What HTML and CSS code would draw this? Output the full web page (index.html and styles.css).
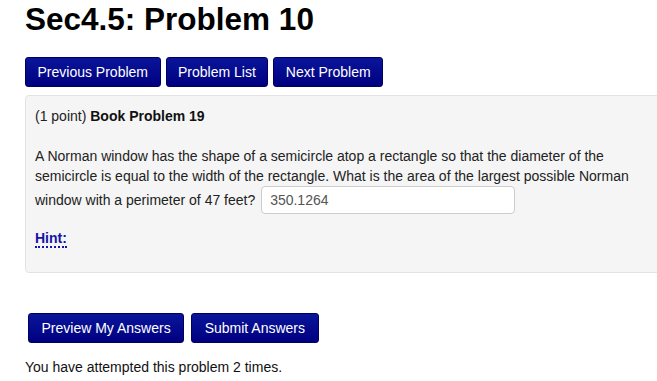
FILE: index.html
```html
<!DOCTYPE html>
<html lang="en">
<head>
<meta charset="utf-8">
<title>Sec4.5: Problem 10</title>
<link rel="stylesheet" href="styles.css">
</head>
<body>
<div class="page">
  <h1 class="title">Sec4.5: Problem 10</h1>
  <nav class="nav">
    <a class="btn" href="#">Previous Problem</a>
    <a class="btn" href="#">Problem List</a>
    <a class="btn" href="#">Next Problem</a>
  </nav>
  <div class="problem">
    <div class="points">(1 point) <b>Book Problem 19</b></div>
    <p class="text">A Norman window has the shape of a semicircle atop a rectangle so that the diameter of the semicircle is equal to the width of the rectangle. What is the area of the largest possible Norman window with a perimeter of 47 feet? <input class="answer" type="text" value="350.1264"></p>
    <div class="hint"><a class="hint-link" href="#">Hint:</a></div>
  </div>
  <div class="actions">
    <button class="btn btn-wide" type="button">Preview My Answers</button>
    <button class="btn btn-wide" type="button">Submit Answers</button>
  </div>
  <p class="attempts">You have attempted this problem 2 times.</p>
</div>
</body>
</html>
```

FILE: styles.css
```css
html, body {
  margin: 0;
  padding: 0;
  background: #fff;
  overflow: hidden;
}
body {
  font-family: "Liberation Sans", Arial, sans-serif;
  font-size: 14px;
  line-height: 20px;
  color: #222;
}
.page {
  padding-left: 25px;
}
.title {
  margin: 2px 0 0;
  font-size: 31.5px;
  line-height: 35px;
  font-weight: bold;
  color: #000;
}
.nav {
  display: flex;
  gap: 5px;
  margin-top: 20px;
}
.btn {
  display: inline-flex;
  align-items: center;
  justify-content: center;
  box-sizing: border-box;
  height: 30px;
  padding: 0 11.5px;
  border: 1px solid #00005e;
  border-radius: 3px;
  background: linear-gradient(to bottom, #0a159a, #000080);
  color: #fff;
  font-family: inherit;
  font-size: 14px;
  text-decoration: none;
  cursor: pointer;
}
.btn-wide {
  padding: 0 12.5px;
}
.problem {
  box-sizing: border-box;
  width: 635px;
  margin-top: 8px;
  padding: 10px 12px 24px 9px;
  background: #f5f5f5;
  border: 1px solid #e3e3e3;
  border-radius: 4px;
}
.points b {
  font-weight: bold;
  color: #111;
}
.text {
  margin: 20px 0 0;
  width: 612px;
}
.answer {
  box-sizing: border-box;
  width: 254px;
  height: 28px;
  padding: 4px 8px;
  margin-left: 2px;
  border: 1px solid #ccc;
  border-radius: 4px;
  background: #fff;
  font-family: inherit;
  font-size: 14px;
  line-height: 18px;
  color: #555;
}
.hint {
  margin-top: 14px;
}
.hint-link {
  color: #1414a8;
  font-weight: bold;
  text-decoration: none;
  border-bottom: 2px dotted #1414a8;
}
.actions {
  display: flex;
  gap: 7px;
  margin-top: 40px;
  padding-left: 3px;
}
.attempts {
  margin: 14px 0 0;
  color: #111;
}
```
